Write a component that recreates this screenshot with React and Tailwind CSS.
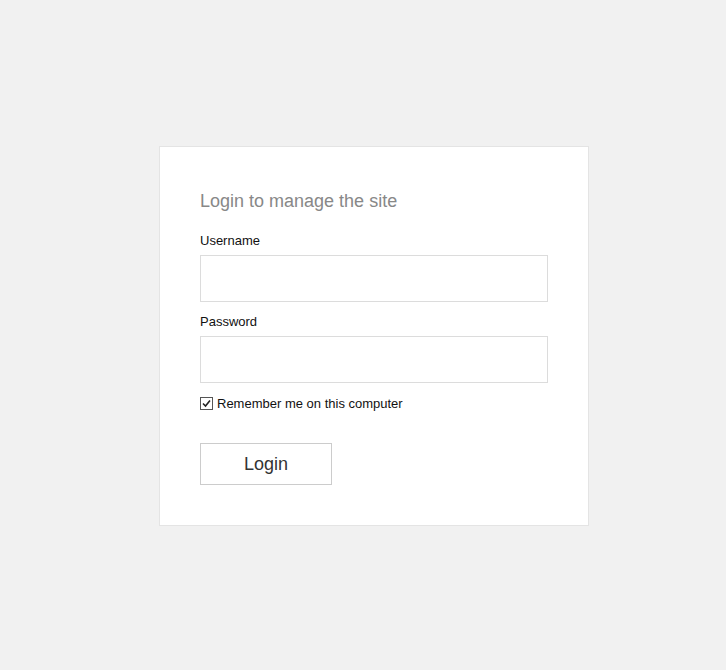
import React, { useState } from "react";

const Field = ({ label, type = "text", className = "" }) => (
  <div className={className}>
    <label className="block text-[13px] leading-[15px] text-[#111]">{label}</label>
    <input
      type={type}
      className="mt-[7px] block w-[348px] h-[47px] border border-[#dcdcdc] bg-white px-3 text-[14px] outline-none"
    />
  </div>
);

const App = () => {
  const [remember, setRemember] = useState(true);

  return (
    <div
      className="min-h-screen w-full bg-[#f1f1f1] pt-[146px] pb-[144px]"
      style={{ fontFamily: '"Liberation Sans", Arial, sans-serif' }}
    >
      <div className="ml-[159px] w-[430px] h-[380px] border border-[#e4e4e4] bg-white px-10 pt-[44px]">
        <h1 className="text-[18px] leading-[21px] text-[#888888]">Login to manage the site</h1>

        <Field label="Username" className="mt-[21px]" />
        <Field label="Password" type="password" className="mt-[12px]" />

        {/* remember me */}
        <label
          className="mt-[13px] flex items-center gap-[4px] text-[13px] leading-[15px] text-[#111] cursor-pointer"
          onClick={() => setRemember(!remember)}
        >
          <span className="flex h-[13px] w-[13px] items-center justify-center border border-[#555] bg-white">
            {remember && (
              <svg width="9" height="9" viewBox="0 0 9 9">
                <path d="M1 4.5 L3.5 7 L8 1.5" fill="none" stroke="#222" strokeWidth="1.6" />
              </svg>
            )}
          </span>
          Remember me on this computer
        </label>

        <button className="mt-[32px] block w-[132px] h-[42px] border border-[#cccccc] bg-white text-[18px] text-[#333]">
          Login
        </button>
      </div>
    </div>
  );
};

export default App;
